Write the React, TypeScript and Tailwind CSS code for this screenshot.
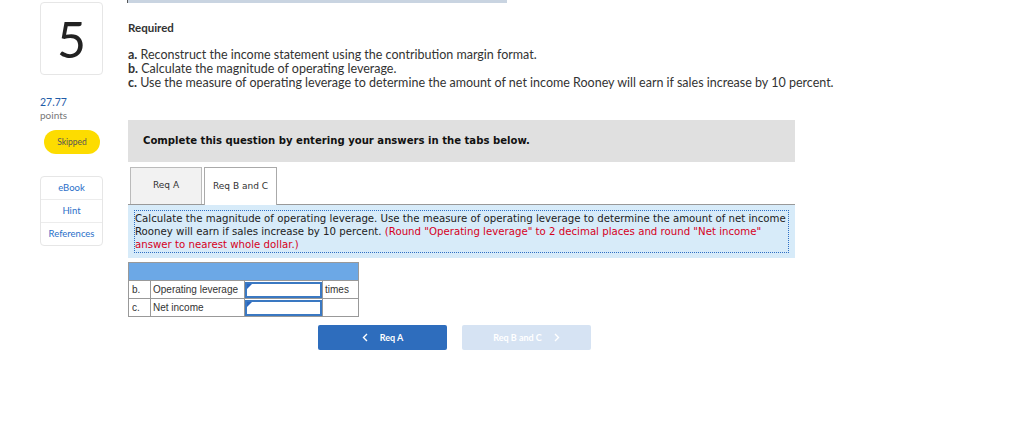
import React from 'react';

const proxima = { fontFamily: 'Lato, "Open Sans", sans-serif' };
const verdana = { fontFamily: '"DejaVu Sans", Verdana, sans-serif' };

const AnswerInput: React.FC = () => (
  <div className="relative h-[16px] border-2 border-[#3a78c2] bg-white">
    <div className="absolute left-0 top-0 w-0 h-0 border-t-[5px] border-r-[5px] border-t-[#2a67c0] border-r-transparent" />
  </div>
);

const App: React.FC = () => {
  return (
    <div className="w-[1024px] h-[428px] bg-white overflow-hidden flex" style={proxima}>
      {/* Left sidebar */}
      <div className="w-[127px] shrink-0 pl-[40px] pt-[2px]">
        <div className="w-[63px] h-[73px] border border-[#e6e6e6] rounded-[4px] flex items-center justify-center">
          <span className="text-[50px] leading-none text-[#222]">5</span>
        </div>
        <div className="mt-[21px] text-[10.5px] leading-[13px] text-[#1f5ca8]">27.77</div>
        <div className="text-[10px] leading-[13px] text-[#777]">points</div>
        <div className="mt-[8px] ml-[4px] w-[56px] h-[24px] rounded-full bg-[#fddc00] flex items-center justify-center text-[8.5px] text-[#555]">
          Skipped
        </div>
        <div className="mt-[22px] w-[63px] border border-[#e6e6e6] rounded-[4px] text-[9.5px] text-[#2a6fc9]">
          <div className="h-[23px] flex items-center justify-center border-b border-[#ececec]">eBook</div>
          <div className="h-[23px] flex items-center justify-center border-b border-[#ececec]">Hint</div>
          <div className="h-[22px] flex items-center justify-center">References</div>
        </div>
      </div>

      {/* Main column */}
      <div className="w-[668px] shrink-0">
        <div className="w-[380px] h-[3px] bg-[#c9d4e1] border-l border-[#555]" />
        <div className="mt-[18px] ml-[1px] text-[11.5px] leading-[14px] font-bold text-[#333]">Required</div>
        <div className="mt-[13px] ml-[1px] text-[12.5px] leading-[14px] text-[#333]">
          <div><b>a.</b> Reconstruct the income statement using the contribution margin format.</div>
          <div><b>b.</b> Calculate the magnitude of operating leverage.</div>
          <div className="whitespace-nowrap"><b>c.</b> Use the measure of operating leverage to determine the amount of net income Rooney will earn if sales increase by 10 percent.</div>
        </div>

        <div className="mt-[30px] ml-[1px] h-[42px] bg-[#e0e0e0] flex items-center pl-[15px]" style={verdana}>
          <span className="text-[10.1px] font-bold text-[#111]">Complete this question by entering your answers in the tabs below.</span>
        </div>

        <div className="ml-[1px]" style={verdana}>
          <div className="mt-[5px] flex items-end pl-[2px] gap-[2px] border-b border-[#999] w-[667px]">
            <div className="w-[72px] h-[37px] bg-[#f2f2f2] border border-b-0 border-[#bbb] flex items-center justify-center text-[9px] text-[#333]">Req A</div>
            <div className="w-[73px] h-[38px] bg-white border border-b-0 border-[#aaa] -mb-px flex items-center justify-center text-[9px] text-[#333]">Req B and C</div>
          </div>
          <div className="bg-[#d7ebf9] px-[6px] pt-[5px] pb-[5px] w-[667px]">
            <div className="border border-dotted border-[#2f6fc4] py-[1px] text-[10.2px] leading-[13px] text-[#222]">
              Calculate the magnitude of operating leverage. Use the measure of operating leverage to determine the amount of net income Rooney will earn if sales increase by 10 percent. <span className="text-[#d6001c] leading-[13px]">(Round "Operating leverage" to 2 decimal places and round "Net income" answer to nearest whole dollar.)</span>
            </div>
          </div>
        </div>

        <table className="mt-[4px] ml-[1px] border-collapse text-[10px] text-[#333]" style={{ fontFamily: '"Liberation Sans", Arial, sans-serif' }}>
          <tbody>
            <tr className="h-[18px] bg-[#6ca8e6]">
              <td colSpan={4} className="border border-[#999]" />
            </tr>
            <tr className="h-[18px]">
              <td className="w-[22px] border border-[#999] pl-[3px]">b.</td>
              <td className="w-[94px] border border-[#999] pl-[2px]">Operating leverage</td>
              <td className="w-[78px] border border-[#999] p-0"><AnswerInput /></td>
              <td className="w-[36px] border border-[#999] pl-[2px]">times</td>
            </tr>
            <tr className="h-[18px]">
              <td className="border border-[#999] pl-[3px]">c.</td>
              <td className="border border-[#999] pl-[2px]">Net income</td>
              <td className="border border-[#999] p-0"><AnswerInput /></td>
              <td className="border border-[#999]" />
            </tr>
          </tbody>
        </table>

        <div className="mt-[8px] ml-[191px] flex gap-[15px]">
          <div className="w-[129px] h-[25px] rounded-[2px] bg-[#2e6dbd] flex items-center justify-center gap-[12px] text-white text-[9px] font-bold">
            <svg width="6" height="9" viewBox="0 0 6 9" fill="none"><path d="M5 1L1.5 4.5L5 8" stroke="white" strokeWidth="1.4" /></svg>
            <span>Req A</span>
          </div>
          <div className="w-[129px] h-[25px] rounded-[2px] bg-[#d6e3f3] flex items-center justify-center gap-[12px] text-white text-[9px] font-bold">
            <span>Req B and C</span>
            <svg width="6" height="9" viewBox="0 0 6 9" fill="none"><path d="M1 1L4.5 4.5L1 8" stroke="white" strokeWidth="1.4" /></svg>
          </div>
        </div>
      </div>
    </div>
  );
};

export default App;
